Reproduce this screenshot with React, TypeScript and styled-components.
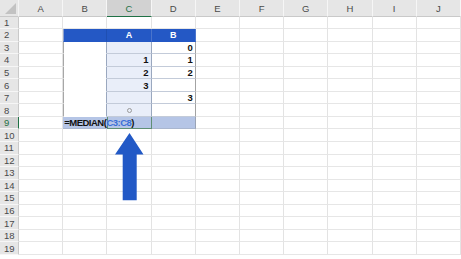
import React from 'react';
import styled, { createGlobalStyle, css } from 'styled-components';

const GlobalStyle = createGlobalStyle`
    html, body {
        margin: 0;
        padding: 0;
        background: #ffffff;
        font-family: "Liberation Sans", Arial, sans-serif;
    }
`;

const COLS = ['A', 'B', 'C', 'D', 'E', 'F', 'G', 'H', 'I', 'J'];
const ROWS = Array.from({ length: 19 }, (_, i) => i + 1);

type Value = { c?: string; d?: string };

const tableValues: Record<number, Value> = {
    3: { d: '0' },
    4: { c: '1', d: '1' },
    5: { c: '2', d: '2' },
    6: { c: '3' },
    7: { d: '3' },
    8: { c: 'dot' },
};

const App = () => {
    const renderCell = (row: number, col: string) => {
        const key = `${col}${row}`;

        if (row === 2 && (col === 'B' || col === 'C' || col === 'D')) {
            return (
                <HeadCell key={key} $first={col === 'B'} $last={col === 'D'}>
                    {col === 'C' ? 'A' : col === 'D' ? 'B' : ''}
                </HeadCell>
            );
        }

        if (row >= 3 && row <= 8) {
            const v = tableValues[row] || {};
            if (col === 'B') return <LabelCell key={key} />;
            if (col === 'C')
                return (
                    <ValueCell key={key} $tinted>
                        {v.c === 'dot' ? <Dot /> : v.c}
                    </ValueCell>
                );
            if (col === 'D') return <ValueCell key={key} $last>{v.d}</ValueCell>;
        }

        if (row === 9) {
            if (col === 'B')
                return (
                    <FormulaCell key={key}>
                        <FormulaText>
                            =MEDIAN(<RefText>C3:C8</RefText>)
                        </FormulaText>
                    </FormulaCell>
                );
            if (col === 'C') return <FormulaCell key={key} $active />;
            if (col === 'D') return <FormulaCell key={key} $last />;
        }

        return <Cell key={key} />;
    };

    return (
        <>
            <GlobalStyle />
            <Sheet>
                <Grid>
                    <Corner>
                        <CornerTriangle />
                    </Corner>
                    {COLS.map(col => (
                        <ColHeader key={col} $selected={col === 'C'}>
                            {col}
                        </ColHeader>
                    ))}
                    {ROWS.map(row => (
                        <React.Fragment key={row}>
                            <RowHeader $selected={row === 9}>{row}</RowHeader>
                            {COLS.map(col => renderCell(row, col))}
                        </React.Fragment>
                    ))}
                </Grid>
                <Arrow viewBox="0 0 30 68" aria-hidden>
                    <polygon points="14.5,0 28.5,21.6 21.7,21.6 21.7,67.3 7.7,67.3 7.7,21.6 0,21.6" fill="#2259c6" />
                </Arrow>
            </Sheet>
        </>
    );
};

export default App;

const Sheet = styled.div`
    position: relative;
    width: 461px;
    height: 259px;
    overflow: hidden;
    background: #ffffff;
`;

const Grid = styled.div`
    display: grid;
    grid-template-columns: 19px repeat(10, 44.2px);
    grid-template-rows: 16.5px repeat(19, 12.55px);
    font-size: 9px;
`;

const Corner = styled.div`
    position: relative;
    background: #e6e6e6;
    border-right: 1px solid #f4f4f4;
    border-bottom: 1px solid #c9c9c9;
`;

const CornerTriangle = styled.div`
    position: absolute;
    right: 2px;
    bottom: 2px;
    width: 0;
    height: 0;
    border-left: 11px solid transparent;
    border-bottom: 11px solid #c2c2c2;
`;

const ColHeader = styled.div<{ $selected?: boolean }>`
    display: flex;
    align-items: center;
    justify-content: center;
    padding-top: 1px;
    background: ${p => (p.$selected ? '#d2d2d2' : '#e6e6e6')};
    color: ${p => (p.$selected ? '#1f7145' : '#4a4a4a')};
    border-right: 1px solid #f6f6f6;
    border-bottom: ${p => (p.$selected ? '1.5px solid #1f7145' : '1px solid #c9c9c9')};
    box-sizing: border-box;
    font-size: 9.5px;
`;

const RowHeader = styled.div<{ $selected?: boolean }>`
    display: flex;
    align-items: center;
    padding-left: 4px;
    background: ${p => (p.$selected ? '#d2d2d2' : '#e6e6e6')};
    color: ${p => (p.$selected ? '#1f7145' : '#4a4a4a')};
    border-bottom: 1px solid #f6f6f6;
    border-right: ${p => (p.$selected ? '1.5px solid #1f7145' : '1px solid #c9c9c9')};
    box-sizing: border-box;
    font-size: 9.5px;
`;

const Cell = styled.div`
    border-right: 1px solid #e3e3e3;
    border-bottom: 1px solid #e6e6e6;
    box-sizing: border-box;
`;

const HeadCell = styled(Cell)<{ $first?: boolean; $last?: boolean }>`
    display: flex;
    align-items: center;
    justify-content: center;
    background: #2458c5;
    color: #ffffff;
    font-weight: bold;
    font-size: 9px;
    border-right: 1px solid ${p => (p.$first ? '#1f4fb2' : '#4a74cc')};
    border-bottom: 1px solid #2458c5;
    ${p =>
        p.$first &&
        css`
            border-left: 1px solid #8a9fce;
        `}
`;

const LabelCell = styled(Cell)`
    background: #ffffff;
    border-left: 1.5px solid #a7a7a7;
    border-right: 1px solid #9aa8bf;
    border-bottom: 1px solid #ffffff;
`;

const ValueCell = styled(Cell)<{ $tinted?: boolean; $last?: boolean }>`
    position: relative;
    display: flex;
    align-items: center;
    justify-content: flex-end;
    padding-right: 2px;
    background: ${p => (p.$tinted ? '#e9eef9' : '#ffffff')};
    border-right: 1px solid ${p => (p.$last ? '#a3a3a3' : '#9aa8bf')};
    border-bottom: 1px solid #c3cbd9;
    color: #111111;
    font-weight: bold;
    font-size: 9.5px;
`;

const Dot = styled.span`
    position: absolute;
    left: 50%;
    top: 50%;
    width: 3px;
    height: 3px;
    margin: -2px 0 0 -2px;
    border: 1px solid #9a9a9a;
    border-radius: 50%;
`;

const FormulaCell = styled(Cell)<{ $active?: boolean; $last?: boolean }>`
    position: relative;
    display: flex;
    align-items: center;
    background: #b5c5e6;
    border-right: 1px solid ${p => (p.$active ? '#5f8f75' : p.$last ? '#9aa3b5' : '#b5c5e6')};
    border-bottom: 1px solid ${p => (p.$active ? '#5f8f75' : '#a9b6cf')};
    ${p =>
        p.$active &&
        css`
            border-left: 1px solid #5f8f75;
        `}
`;

const FormulaText = styled.span`
    position: relative;
    z-index: 1;
    padding-left: 1px;
    white-space: nowrap;
    font-weight: bold;
    font-size: 9.5px;
    letter-spacing: -0.5px;
    color: #111111;
`;

const RefText = styled.span`
    color: #3b6fd8;
`;

const Arrow = styled.svg`
    position: absolute;
    left: 115px;
    top: 132.7px;
    width: 30px;
    height: 68px;
`;
